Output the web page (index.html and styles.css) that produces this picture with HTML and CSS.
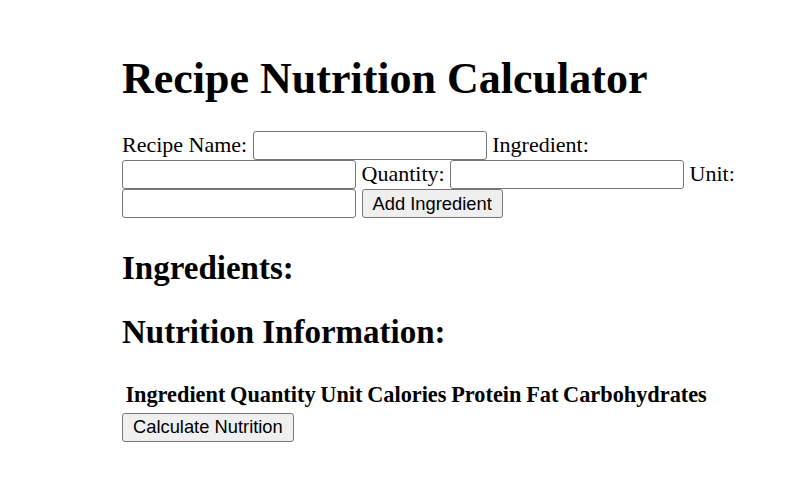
FILE: index.html
```html
<!DOCTYPE html>
<html>
<head>
<meta charset="utf-8">
<title>Recipe Nutrition Calculator</title>
<link rel="stylesheet" href="styles.css">
</head>
<body>
<div class="container">
  <h1 class="title">Recipe Nutrition Calculator</h1>
  <form class="recipe-form">
    <label for="recipe-name">Recipe Name:</label>
    <input type="text" id="recipe-name" class="field">
    <label for="ingredient">Ingredient:</label>
    <input type="text" id="ingredient" class="field">
    <label for="quantity">Quantity:</label>
    <input type="text" id="quantity" class="field">
    <label for="unit">Unit:</label>
    <input type="text" id="unit" class="field">
    <button type="button" class="btn">Add Ingredient</button>
  </form>
  <h2 class="section-title first">Ingredients:</h2>
  <ul class="ingredient-list"></ul>
  <h2 class="section-title">Nutrition Information:</h2>
  <table class="nutrition-table">
    <thead>
      <tr>
        <th>Ingredient</th>
        <th>Quantity</th>
        <th>Unit</th>
        <th>Calories</th>
        <th>Protein</th>
        <th>Fat</th>
        <th>Carbohydrates</th>
      </tr>
    </thead>
    <tbody></tbody>
  </table>
  <button type="button" class="btn calc-btn">Calculate Nutrition</button>
</div>
</body>
</html>
```

FILE: styles.css
```css
html, body {
  margin: 0;
  padding: 0;
  background: #ffffff;
}

body {
  font-family: "Liberation Serif", "Times New Roman", serif;
  font-size: 22px;
  color: #000000;
}

.container {
  width: 640px;
  margin-left: 122px;
  padding-top: 24px;
}

.title {
  font-size: 44px;
  font-weight: bold;
  margin: 29px 0 27px 0;
}

.recipe-form {
  margin: 0;
}

.field {
  box-sizing: border-box;
  width: 234px;
  height: 29px;
  padding: 1px 3px;
  border: 1px solid #767676;
  border-radius: 3px;
  font-family: "Liberation Sans", Arial, sans-serif;
  font-size: 18.33px;
  background: #ffffff;
  vertical-align: baseline;
}

.btn {
  box-sizing: border-box;
  height: 29px;
  padding: 1px 10px;
  border: 1px solid #767676;
  border-radius: 3px;
  background: #efefef;
  color: #000000;
  font-family: "Liberation Sans", Arial, sans-serif;
  font-size: 18.33px;
}

.section-title {
  font-size: 33px;
  font-weight: bold;
  margin: 27.4px 0;
}

.section-title.first {
  margin-top: 32px;
}

.ingredient-list {
  margin: 22px 0;
  padding-left: 55px;
}

.nutrition-table {
  border-spacing: 2.75px;
}

.nutrition-table th {
  padding: 1.375px;
  font-size: 22.3px;
  font-weight: bold;
}

.calc-btn {
  margin-top: 1px;
}
```
